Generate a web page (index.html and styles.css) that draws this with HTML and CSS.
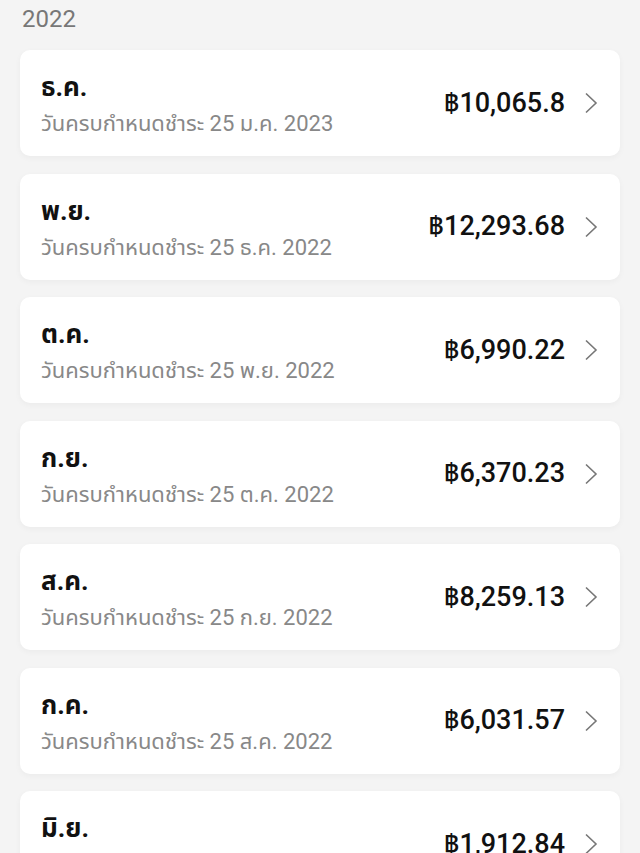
FILE: index.html
```html
<!DOCTYPE html>
<html lang="th">
<head>
<meta charset="utf-8">
<link rel="stylesheet" href="styles.css">
</head>
<body>
<div class="page">
  <div class="year">2022</div>
  <div class="list">
    <div class="card"><div class="info"><div class="month">ธ.ค.</div><div class="due">วันครบกำหนดชำระ 25 ม.ค. 2023</div></div><div class="amount">฿10,065.8</div><svg class="chev" viewBox="0 0 14 22"><path d="M2 1.5 L12 11 L2 20.5" /></svg></div>
    <div class="card"><div class="info"><div class="month">พ.ย.</div><div class="due">วันครบกำหนดชำระ 25 ธ.ค. 2022</div></div><div class="amount">฿12,293.68</div><svg class="chev" viewBox="0 0 14 22"><path d="M2 1.5 L12 11 L2 20.5" /></svg></div>
    <div class="card"><div class="info"><div class="month">ต.ค.</div><div class="due">วันครบกำหนดชำระ 25 พ.ย. 2022</div></div><div class="amount">฿6,990.22</div><svg class="chev" viewBox="0 0 14 22"><path d="M2 1.5 L12 11 L2 20.5" /></svg></div>
    <div class="card"><div class="info"><div class="month">ก.ย.</div><div class="due">วันครบกำหนดชำระ 25 ต.ค. 2022</div></div><div class="amount">฿6,370.23</div><svg class="chev" viewBox="0 0 14 22"><path d="M2 1.5 L12 11 L2 20.5" /></svg></div>
    <div class="card"><div class="info"><div class="month">ส.ค.</div><div class="due">วันครบกำหนดชำระ 25 ก.ย. 2022</div></div><div class="amount">฿8,259.13</div><svg class="chev" viewBox="0 0 14 22"><path d="M2 1.5 L12 11 L2 20.5" /></svg></div>
    <div class="card"><div class="info"><div class="month">ก.ค.</div><div class="due">วันครบกำหนดชำระ 25 ส.ค. 2022</div></div><div class="amount">฿6,031.57</div><svg class="chev" viewBox="0 0 14 22"><path d="M2 1.5 L12 11 L2 20.5" /></svg></div>
    <div class="card"><div class="info"><div class="month">มิ.ย.</div><div class="due">วันครบกำหนดชำระ 25 ก.ค. 2022</div></div><div class="amount">฿1,912.84</div><svg class="chev" viewBox="0 0 14 22"><path d="M2 1.5 L12 11 L2 20.5" /></svg></div>
  </div>
</div>
</body>
</html>
```
FILE: styles.css
```css
html, body {
  margin: 0;
  padding: 0;
  background: #f4f4f4;
}
body {
  height: 853px;
  overflow: hidden;
  font-family: Roboto, "Noto Sans", "Noto Sans Thai", "DejaVu Sans", sans-serif;
  color: #111;
}
.page {
  padding: 0 20px;
}
.year {
  font-size: 24px;
  color: #777;
  padding: 4px 0 0 2px;
  height: 50px;
  line-height: 30px;
  box-sizing: border-box;
}
.list {
  display: flex;
  flex-direction: column;
  gap: 17.5px;
}
.card {
  background: #fff;
  border-radius: 10px;
  box-shadow: 0 2px 6px rgba(0,0,0,0.04);
  height: 106px;
  flex-shrink: 0;
  box-sizing: border-box;
  padding: 0 22px 0 21px;
  display: flex;
  align-items: center;
}
.info {
  flex: 1;
  display: flex;
  flex-direction: column;
  gap: 7px;
  padding-top: 3px;
}
.month {
  font-size: 26px;
  font-weight: 700;
  color: #111;
  line-height: 32px;
}
.due {
  font-size: 22px;
  color: #888;
  line-height: 28px;
  white-space: nowrap;
}
.amount {
  font-size: 27px;
  font-weight: 500;
  color: #111;
}
.chev {
  width: 14px;
  height: 22px;
  margin-left: 19px;
  fill: none;
  stroke: #777;
  stroke-width: 1.6;
}
```
